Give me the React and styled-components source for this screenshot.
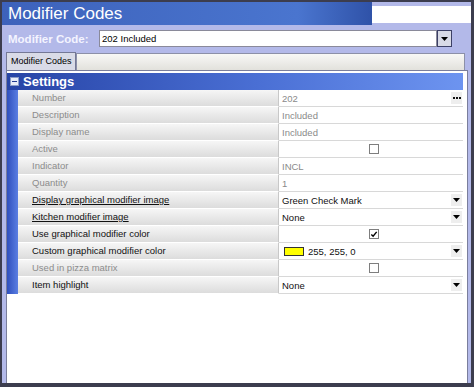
import styled, { createGlobalStyle } from "styled-components"

const Global = createGlobalStyle`
  html, body { margin: 0; padding: 0; }
  body { font-family: "Liberation Sans", Arial, sans-serif; }
  * { box-sizing: border-box; }
`

const rows = [
  { label: "Number", dim: true, value: "202", muted: true, kind: "dots" },
  { label: "Description", dim: true, value: "Included", muted: true },
  { label: "Display name", dim: true, value: "Included", muted: true },
  { label: "Active", dim: true, kind: "check", checked: false },
  { label: "Indicator", dim: true, value: "INCL", muted: true },
  { label: "Quantity", dim: true, value: "1", muted: true },
  { label: "Display graphical modifier image", link: true, value: "Green Check Mark", kind: "drop" },
  { label: "Kitchen modifier image", link: true, value: "None", kind: "drop" },
  { label: "Use graphical modifier color", kind: "check", checked: true },
  { label: "Custom graphical modifier color", value: "255, 255, 0", kind: "drop", swatch: "#ffff00" },
  { label: "Used in pizza matrix", dim: true, kind: "check", checked: false },
  { label: "Item highlight", value: "None", kind: "drop" },
]

const Arrow = () => (
  <svg width="7" height="4" viewBox="0 0 7 4">
    <path d="M0 0 H7 L3.5 4 Z" fill="#000" />
  </svg>
)

const Dots = () => (
  <svg width="8" height="2" viewBox="0 0 8 2">
    <rect x="0" y="0" width="2" height="2" fill="#111" />
    <rect x="3" y="0" width="2" height="2" fill="#111" />
    <rect x="6" y="0" width="2" height="2" fill="#111" />
  </svg>
)

const App = () => {
  return (
    <>
      <Global />
      <Frame>
        <Inner>
          <TitleBar>
            <Title>Modifier Codes</Title>
            <TitleBlank />
          </TitleBar>
          <CodeRow>
            <CodeLabel>Modifier Code:</CodeLabel>
            <CodeSelect>202 Included</CodeSelect>
            <CodeButton><Arrow /></CodeButton>
          </CodeRow>
          <TabStrip>
            <Tab>Modifier Codes</Tab>
            <TabFill />
          </TabStrip>
          <Panel>
            <SectionHeader>
              <Collapse />
              <SectionTitle>Settings</SectionTitle>
            </SectionHeader>
            <Grid>
              {rows.map(r => (
                <Row key={r.label}>
                  <Strip />
                  <LabelCell $dim={r.dim} $link={r.link}>{r.label}</LabelCell>
                  <ValueCell $muted={r.muted} $center={r.kind === "check"}>
                    {r.kind === "check" && (
                      <Check>
                        {r.checked && (
                          <svg width="9" height="9" viewBox="0 0 9 9">
                            <path d="M1.5 4.5 L3.5 6.5 L7.5 1.5" stroke="#000" strokeWidth="1.6" fill="none" />
                          </svg>
                        )}
                      </Check>
                    )}
                    {r.swatch && <Swatch style={{ background: r.swatch }} />}
                    {r.value && <ValueText>{r.value}</ValueText>}
                    {r.kind === "drop" && <CellButton><Arrow /></CellButton>}
                    {r.kind === "dots" && <CellButton><Dots /></CellButton>}
                  </ValueCell>
                </Row>
              ))}
            </Grid>
          </Panel>
        </Inner>
      </Frame>
    </>
  )
}

const Frame = styled.div`
  width: 474px;
  height: 387px;
  background: #3c3d4e;
  padding: 2px 3px 4px 2px;
`

const Inner = styled.div`
  height: 100%;
  background: #b3b9e9;
  display: flex;
  flex-direction: column;
`

const TitleBar = styled.div`
  display: flex;
  height: 23px;
  flex-shrink: 0;
`

const Title = styled.div`
  flex: 1;
  background: linear-gradient(to right, #3d62bb, #4a75cf 80%, #2f52a8);
  color: #fff;
  font-size: 17px;
  line-height: 23px;
  padding-left: 6px;
`

const TitleBlank = styled.div`
  width: 99px;
  margin: 4px 0 2px;
  background: #fff;
`

const CodeRow = styled.div`
  display: flex;
  align-items: center;
  height: 27px;
  padding-left: 6px;
  flex-shrink: 0;
`

const CodeLabel = styled.div`
  width: 91px;
  color: #f4f4ff;
  font-weight: bold;
  font-size: 11.5px;
`

const CodeSelect = styled.div`
  width: 338px;
  height: 17px;
  background: #fff;
  border: 1px solid #8a8a9a;
  font-size: 9.5px;
  line-height: 15px;
  padding-left: 2px;
  color: #000;
`

const CodeButton = styled.div`
  width: 15px;
  height: 17px;
  background: #d8dae6;
  border: 1px solid #3c4066;
  display: flex;
  align-items: center;
  justify-content: center;
`

const TabStrip = styled.div`
  display: flex;
  height: 18px;
  margin: 0 6px 0 4px;
  flex-shrink: 0;
`

const Tab = styled.div`
  width: 70px;
  background: #d9dbe7;
  border: 1px solid #747896;
  border-bottom: none;
  font-size: 9px;
  line-height: 17px;
  padding-left: 4px;
  color: #000;
`

const TabFill = styled.div`
  flex: 1;
  margin-top: 1px;
  background: linear-gradient(#f8f8f6, #e2e1dc);
  border: 1px solid #8c90a8;
  border-bottom: none;
`

const Panel = styled.div`
  flex: 1;
  margin: 0 3px 0 4px;
  background: #fff;
  border: 1px solid #7a7e9c;
  border-bottom: none;
  padding: 2px 4px 0 0;
`

const SectionHeader = styled.div`
  display: flex;
  align-items: center;
  height: 17px;
  background: linear-gradient(to right, #2744a6, #4a6fd4 55%, #6d94f0);
  padding-left: 3px;
`

const Collapse = styled.div`
  width: 9px;
  height: 9px;
  background: #e8ecf8;
  border: 1px solid #8c9cc8;
  position: relative;
  &::after {
    content: "";
    position: absolute;
    left: 1px;
    right: 1px;
    top: 3px;
    height: 1px;
    background: #223a90;
  }
`

const SectionTitle = styled.div`
  color: #fff;
  font-weight: bold;
  font-size: 13px;
  margin-left: 4px;
`

const Grid = styled.div`
  display: flex;
  flex-direction: column;
`

const Row = styled.div`
  display: flex;
  height: 17px;
`

const Strip = styled.div`
  width: 11px;
  background: linear-gradient(to right, #2f4fbd, #5a7ee2);
`

const LabelCell = styled.div`
  width: 261px;
  background: linear-gradient(#f6f6f6, #dcdcdc);
  border-bottom: 1px solid #fff;
  border-right: 1px solid #c8c8c8;
  font-size: 9.5px;
  line-height: 16px;
  padding-left: 14px;
  color: ${p => (p.$dim ? "#8c8c8c" : "#111")};
  text-decoration: ${p => (p.$link ? "underline" : "none")};
  white-space: nowrap;
`

const ValueCell = styled.div`
  flex: 1;
  display: flex;
  align-items: center;
  justify-content: ${p => (p.$center ? "center" : "flex-start")};
  border-bottom: 1px solid #d8d8d8;
  padding-left: 3px;
  font-size: 9.5px;
  color: ${p => (p.$muted ? "#8a8a8a" : "#111")};
  position: relative;
`

const ValueText = styled.span`
  white-space: nowrap;
`

const Check = styled.div`
  width: 10px;
  height: 10px;
  border: 1px solid #7e7e7e;
  background: #fff;
  display: flex;
  align-items: center;
  justify-content: center;
  margin-left: 2px;
`

const Swatch = styled.div`
  width: 20px;
  height: 9px;
  border: 1px solid #333;
  margin: 0 4px 0 2px;
`

const CellButton = styled.div`
  position: absolute;
  right: 1px;
  top: 2px;
  width: 11px;
  height: 12px;
  background: #eeeeee;
  display: flex;
  align-items: center;
  justify-content: center;
`

export default App
